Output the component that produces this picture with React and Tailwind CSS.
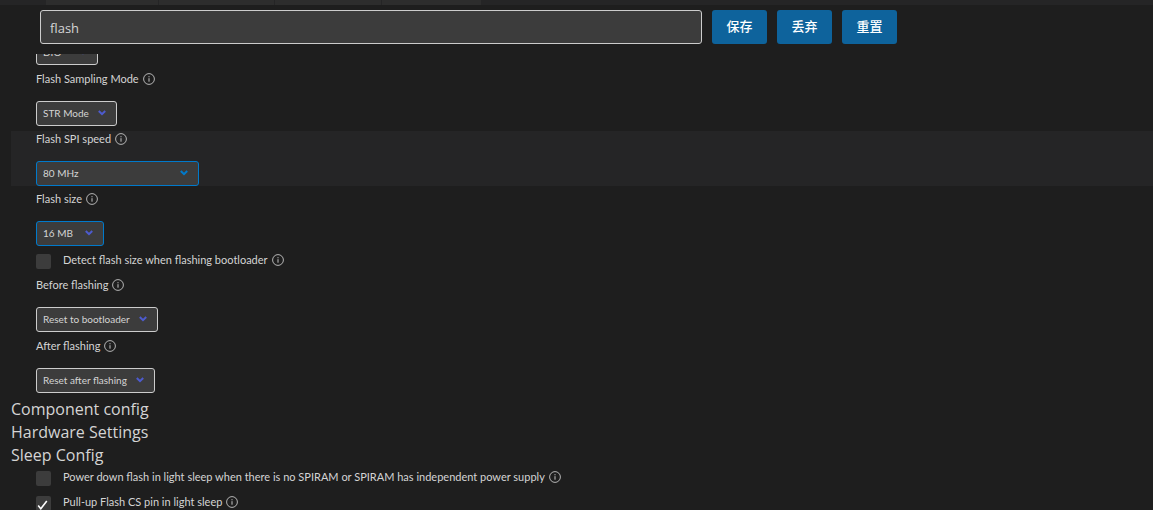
import React, { useState } from "react";

const openTabs = [
  { id: 1, width: "w-[113px]" },
  { id: 2, width: "w-[116px]" },
  { id: 3, width: "w-[107px]" },
  { id: 4, width: "w-[100px]" },
];

function InfoIcon() {
  return (
    <svg
      viewBox="0 0 12 12"
      className="size-3 shrink-0 text-[#c5c5c5]"
      fill="none"
      stroke="currentColor"
      aria-hidden="true"
    >
      <circle cx="6" cy="6" r="5.4" strokeWidth="0.9" />
      <path d="M6 5.2v3.5" strokeWidth="1" />
      <path d="M6 3.2v1.1" strokeWidth="1.1" />
    </svg>
  );
}

function SelectBox({ id, name, options, width, border, chevron }) {
  const [value, setValue] = useState(options[0]);

  return (
    <div className={`relative max-w-full ${width}`}>
      <select
        id={id}
        aria-label={name}
        value={value}
        onChange={(e) => setValue(e.target.value)}
        className={`block h-[25px] w-full appearance-none rounded-[3px] border bg-[#3c3c3c] pr-5 pl-1.5 text-[10px] text-[#d4d4d4] outline-none ${border}`}
      >
        {options.map((option) => (
          <option key={option}>{option}</option>
        ))}
      </select>
      <svg
        viewBox="0 0 8 6"
        className={`pointer-events-none absolute top-[9px] right-[11px] h-1.5 w-2 ${chevron}`}
        fill="none"
        stroke="currentColor"
        strokeWidth="2"
        aria-hidden="true"
      >
        <path d="M0.8 1L4 4.2L7.2 1" />
      </svg>
    </div>
  );
}

function SelectField({ label, active, ...box }) {
  return (
    <div className={`pl-[25px] ${active ? "bg-[#252526]" : ""}`}>
      <div className="mb-3.5 flex h-4 items-center gap-1">
        <label htmlFor={box.id}>{label}</label>
        <InfoIcon />
      </div>
      <SelectBox {...box} />
    </div>
  );
}

function CheckField({ id, label, defaultChecked = false }) {
  return (
    <div className="flex h-[18px] items-center pl-[25px]">
      <span className="relative mt-0.5 mr-3 size-[15px] shrink-0">
        <input
          id={id}
          type="checkbox"
          defaultChecked={defaultChecked}
          className="peer block size-full appearance-none rounded-[2px] bg-[#3c3c3c]"
        />
        <svg
          viewBox="0 0 15 15"
          className="pointer-events-none absolute inset-0 hidden text-white peer-checked:block"
          fill="none"
          stroke="currentColor"
          strokeWidth="1.6"
          aria-hidden="true"
        >
          <path d="M2.2 9.6L4.8 12.8L10.8 5" />
        </svg>
      </span>
      <label htmlFor={id} className="mr-1">
        {label}
      </label>
      <InfoIcon />
    </div>
  );
}

function ToolbarButton({ children }) {
  return (
    <button
      type="button"
      className="h-[34px] w-[55px] rounded-[3px] bg-[#0e639c] text-[13px] font-medium text-white hover:bg-[#1177bb]"
    >
      {children}
    </button>
  );
}

function App() {
  const [search, setSearch] = useState("flash");
  const normal = "border-[#cccccc]";
  const purple = "text-[#4d5bce]";

  return (
    <div className="flex h-screen flex-col overflow-hidden bg-[#1e1e1e] font-['Lato','Noto_Sans_CJK_SC',sans-serif] text-[11px] text-[#d4d4d4]">
      <div className="flex h-[5px] shrink-0 bg-[#252526] pl-[46px]">
        {openTabs.map((tab) => (
          <div
            key={tab.id}
            className={`border-r border-[#252526] bg-[#2d2d2d] ${tab.width}`}
          />
        ))}
      </div>

      <div className="mt-[5px] flex shrink-0 gap-2.5 pr-64 pl-10">
        <input
          type="text"
          aria-label="Search"
          value={search}
          onChange={(e) => setSearch(e.target.value)}
          className="h-[34px] min-w-0 flex-1 rounded-[3px] border border-[#cccccc] bg-[#3c3c3c] px-[9px] pt-0.5 font-['Open_Sans',sans-serif] text-[13px] outline-none"
        />
        <ToolbarButton>保存</ToolbarButton>
        <ToolbarButton>丢弃</ToolbarButton>
        <ToolbarButton>重置</ToolbarButton>
      </div>

      <main className="mt-2.5 min-h-0 flex-1 overflow-hidden pl-[11px]">
        {/* list is scrolled part way through the flash mode field */}
        <div className="-mt-3.5 mb-1.5 pl-[25px]">
          <SelectBox
            id="flash-mode"
            name="Flash SPI mode"
            options={["DIO", "QIO", "QOUT", "DOUT"]}
            width="w-[62px]"
            border={normal}
            chevron={purple}
          />
        </div>
        <div className="flex flex-col gap-[5px]">
          <SelectField
            id="flash-sampling"
            label="Flash Sampling Mode"
            options={["STR Mode"]}
            width="w-[81px]"
            border={normal}
            chevron={purple}
          />
          <SelectField
            id="flash-speed"
            label="Flash SPI speed"
            options={["80 MHz", "40 MHz", "20 MHz"]}
            width="w-[163px]"
            border="border-[#007acc]"
            chevron="text-[#007acc]"
            active
          />
          <SelectField
            id="flash-size"
            label="Flash size"
            options={["16 MB", "8 MB", "4 MB", "2 MB"]}
            width="w-[68px]"
            border="border-[#007acc]"
            chevron={purple}
          />
        </div>
        <div className="mt-[5px] mb-2">
          <CheckField
            id="detect-size"
            label="Detect flash size when flashing bootloader"
          />
        </div>
        <div className="flex flex-col gap-1.5">
          <SelectField
            id="before-flashing"
            label="Before flashing"
            options={["Reset to bootloader"]}
            width="w-[122px]"
            border={normal}
            chevron={purple}
          />
          <SelectField
            id="after-flashing"
            label="After flashing"
            options={["Reset after flashing"]}
            width="w-[119px]"
            border={normal}
            chevron={purple}
          />
        </div>

        <div className="mt-[5px] mb-px font-['Open_Sans',sans-serif] text-base leading-[23px]">
          <h2>Component config</h2>
          <h2>Hardware Settings</h2>
          <h2>Sleep Config</h2>
        </div>
        <div className="flex flex-col gap-[7px]">
          <CheckField
            id="power-down"
            label="Power down flash in light sleep when there is no SPIRAM or SPIRAM has independent power supply"
          />
          <CheckField
            id="pull-up"
            label="Pull-up Flash CS pin in light sleep"
            defaultChecked
          />
        </div>
      </main>
    </div>
  );
}

export default App;
